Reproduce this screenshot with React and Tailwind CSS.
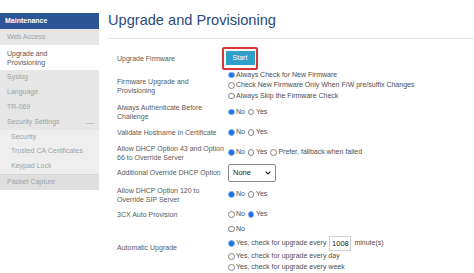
import React from 'react';

const font = { fontFamily: '"Liberation Sans", Arial, sans-serif' };

function Radio({ on }) {
  return on ? (
    <span className="inline-block h-[6.5px] w-[6.5px] shrink-0 rounded-full border border-[#7fb0ef] bg-[#1f6fe0]" />
  ) : (
    <span className="inline-block h-[6.5px] w-[6.5px] shrink-0 rounded-full border border-[#858585] bg-white" />
  );
}

function Opt({ on, children }) {
  return (
    <span className="inline-flex items-center gap-[1.5px]">
      <Radio on={on} />
      <span>{children}</span>
    </span>
  );
}

function Row({ label, h, children }) {
  return (
    <div className={`flex items-center ${h}`}>
      <div className="w-[120px] shrink-0 pl-[9px] leading-[9px] text-[#5a5a5a]">{label}</div>
      <div className="flex-1 text-[#4d4d4d]">{children}</div>
    </div>
  );
}

const sideTop = ['Syslog', 'Language', 'TR-069'];

export default function App() {
  return (
    <div style={font} className="flex h-[273px] w-[474px] overflow-hidden bg-white text-[7px]">
      <aside className="w-[99px] shrink-0 pt-[13px]">
        <div className="flex h-[16px] items-center bg-[#2c5596] pl-[5px] font-bold text-white">Maintenance</div>
        <div className="flex h-[16px] items-center bg-[#e6e6e6] pl-[7px] text-[#a3a3a3]">Web Access</div>
        <div className="flex h-[25px] items-center bg-white pl-[7px] leading-[9px] text-[#555]">
          Upgrade and<br />Provisioning
        </div>
        {sideTop.map((t) => (
          <div key={t} className="flex h-[15px] items-center bg-[#e6e6e6] pl-[7px] text-[#a3a3a3]">{t}</div>
        ))}
        <div className="flex h-[15px] items-center justify-between bg-[#e6e6e6] pl-[7px] pr-[5px] text-[#a3a3a3]">
          <span>Security Settings</span>
          <span className="text-[8px] leading-none">—</span>
        </div>
        <div className="bg-[#eeeeee] text-[#a3a3a3]">
          <div className="flex h-[14px] items-center pl-[11px]">Security</div>
          <div className="flex h-[15px] items-center pl-[11px]">Trusted CA Certificates</div>
          <div className="flex h-[15px] items-center pl-[11px]">Keypad Lock</div>
        </div>
        <div className="flex h-[16px] items-center border-t border-[#d6d6d6] bg-[#dfdfdf] pl-[7px] text-[#a3a3a3]">Packet Capture</div>
      </aside>

      <main className="flex-1 pl-[9px]">
        <div className="h-[39px] border-b border-[#e2e2e2] pt-[13px]">
          <h1 className="text-[14.6px] leading-[15px] text-[#2b4a7b]">Upgrade and Provisioning</h1>
        </div>
        <div className="h-[7px]" />

        <Row label="Upgrade Firmware" h="h-[24px]">
          <div className="ml-[-6px] inline-flex h-[23px] w-[36px] items-center justify-center rounded-[2px] border-2 border-[#d8343b]">
            <button className="flex h-[14px] w-[29px] items-center justify-center bg-[#2f9fc9] text-[7px] text-white">Start</button>
          </div>
        </Row>

        <Row label={<>Firmware Upgrade and<br />Provisioning</>} h="h-[31px]">
          <div className="flex flex-col">
            <div className="flex h-[10px] items-center"><Opt on>Always Check for New Firmware</Opt></div>
            <div className="flex h-[11px] items-center"><Opt>Check New Firmware Only When F/W pre/suffix Changes</Opt></div>
            <div className="flex h-[10px] items-center"><Opt>Always Skip the Firmware Check</Opt></div>
          </div>
        </Row>

        <Row label={<>Always Authenticate Before<br />Challenge</>} h="h-[22px]">
          <div className="flex items-center gap-[3px]"><Opt on>No</Opt><Opt>Yes</Opt></div>
        </Row>

        <Row label="Validate Hostname in Certificate" h="h-[19px]">
          <div className="flex items-center gap-[3px]"><Opt on>No</Opt><Opt>Yes</Opt></div>
        </Row>

        <Row label={<>Allow DHCP Option 43 and Option<br />66 to Override Server</>} h="h-[21px]">
          <div className="flex items-center gap-[3px]"><Opt on>No</Opt><Opt>Yes</Opt><Opt>Prefer, fallback when failed</Opt></div>
        </Row>

        <Row label="Additional Override DHCP Option" h="h-[19px]">
          <div className="flex h-[18px] w-[48px] items-center justify-between rounded-[2px] border border-[#8a8a8a] px-[4px] text-[7.5px] text-[#222]">
            <span>None</span>
            <svg width="6" height="4" viewBox="0 0 6 4"><path d="M0.6 0.6 L3 3 L5.4 0.6" fill="none" stroke="#222" strokeWidth="1.2" /></svg>
          </div>
        </Row>

        <Row label={<>Allow DHCP Option 120 to<br />Override SIP Server</>} h="h-[25px]">
          <div className="flex items-center gap-[3px]"><Opt on>No</Opt><Opt>Yes</Opt></div>
        </Row>

        <Row label="3CX Auto Provision" h="h-[15px]">
          <div className="flex items-center gap-[3px]"><Opt>No</Opt><Opt on>Yes</Opt></div>
        </Row>

        <Row label="Automatic Upgrade" h="h-[51px]">
          <div className="flex flex-col">
            <div className="flex h-[14px] items-center"><Opt>No</Opt></div>
            <div className="flex h-[15px] items-center">
              <Opt on>Yes, check for upgrade every</Opt>
              <span className="mx-[3px] flex h-[15px] w-[22px] items-center justify-center border border-[#cfcfcf] text-[7.5px] text-[#222]">1008</span>
              <span>minute(s)</span>
            </div>
            <div className="flex h-[11px] items-center"><Opt>Yes, check for upgrade every day</Opt></div>
            <div className="flex h-[11px] items-center"><Opt>Yes, check for upgrade every week</Opt></div>
          </div>
        </Row>
      </main>
    </div>
  );
}
